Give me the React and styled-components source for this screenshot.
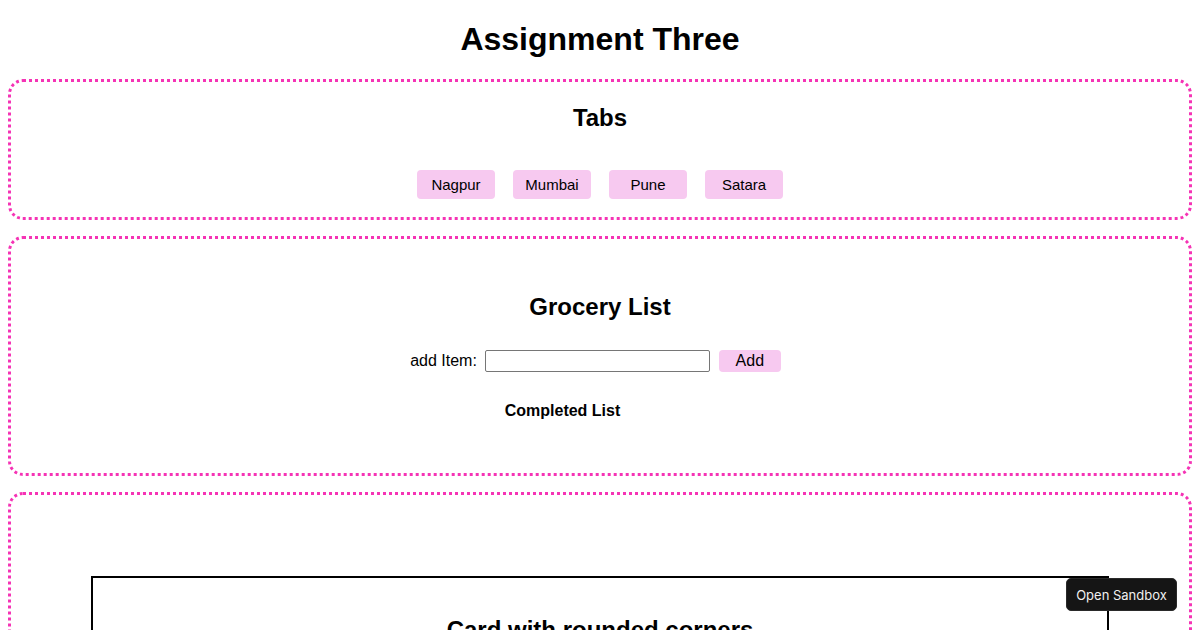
import React from 'react'
import styled, { createGlobalStyle } from 'styled-components'

const GlobalStyle = createGlobalStyle`
  body {
    margin: 0;
    font-family: "Liberation Sans", Arial, sans-serif;
    color: #000;
    background: #fff;
  }
`

const cities = ['Nagpur', 'Mumbai', 'Pune', 'Satara']

const Page = styled.div`
  padding: 0 8px;
`

const Title = styled.h1`
  margin: 21px 0;
  font-size: 32px;
  text-align: center;
`

const Section = styled.section`
  border: 3px dotted #f533b5;
  border-radius: 15px;
  margin-bottom: 16px;
  padding: ${p => p.$pad || '0'};
  text-align: center;
`

const Heading = styled.h2`
  margin: 22px 0 20px;
  font-size: 24px;
  line-height: 27.6px;
`

const TabRow = styled.div`
  display: flex;
  justify-content: center;
  gap: 18px;
  padding: 18px 0 18px;
`

const PinkButton = styled.button`
  width: ${p => p.$w}px;
  height: ${p => p.$h}px;
  padding: 0;
  border: none;
  border-radius: 4px;
  background: #f7c9f0;
  color: #000;
  font-family: "Liberation Sans", Arial, sans-serif;
  font-size: ${p => p.$size}px;
  cursor: pointer;
`

const AddRow = styled.form`
  display: flex;
  justify-content: center;
  align-items: center;
  margin-top: 29px;
  height: 23px;
  padding-right: 9px;
`

const Label = styled.label`
  font-size: 16px;
  margin-right: 8px;
`

const Input = styled.input`
  box-sizing: border-box;
  width: 225px;
  height: 22px;
  margin: 0 9px 0 0;
  border: 1px solid #767676;
  border-radius: 2px;
  font-size: 13px;
`

const ListTitle = styled.h4`
  margin: 30px 0 20.3px;
  padding-right: 75px;
  font-size: 16px;
  line-height: 18.4px;
`

const Card = styled.div`
  margin: 49px 80px 0;
  padding: 16px;
  border: 2px solid #000;
  min-height: 200px;
`

const SandboxButton = styled.a`
  position: fixed;
  right: 23px;
  bottom: 19px;
  box-sizing: border-box;
  width: 111px;
  height: 33px;
  display: flex;
  align-items: center;
  justify-content: center;
  background: #151515;
  border: 1px solid #2a2a2a;
  border-radius: 5px;
  color: #f0f0f0;
  font-family: Inter, "Liberation Sans", sans-serif;
  font-size: 13px;
  text-decoration: none;
`

export default function App() {
  return (
    <Page>
      <GlobalStyle />
      <Title>Assignment Three</Title>

      <Section>
        <Heading>Tabs</Heading>
        <TabRow>
          {cities.map(city => (
            <PinkButton key={city} $w={78} $h={29} $size={15}>{city}</PinkButton>
          ))}
        </TabRow>
      </Section>

      <Section $pad="32px 0">
        <Heading>Grocery List</Heading>
        <AddRow onSubmit={e => e.preventDefault()}>
          <Label htmlFor="item">add Item:</Label>
          <Input id="item" type="text" />
          <PinkButton type="submit" $w={62} $h={22} $size={16}>Add</PinkButton>
        </AddRow>
        <ListTitle>Completed List</ListTitle>
      </Section>

      <Section $pad="32px 0">
        <Card>
          <Heading>Card with rounded corners</Heading>
        </Card>
      </Section>

      <SandboxButton href="#">Open Sandbox</SandboxButton>
    </Page>
  )
}
